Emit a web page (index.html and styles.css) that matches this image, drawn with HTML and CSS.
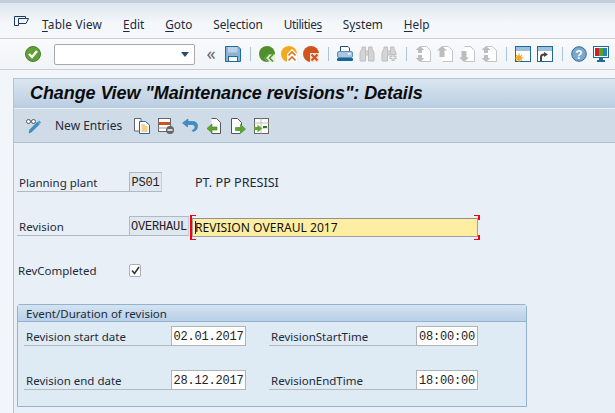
FILE: index.html
```html
<!DOCTYPE html>
<html lang="en">
<head>
<meta charset="utf-8">
<title>Change View</title>
<link rel="stylesheet" href="styles.css">
</head>
<body>
<div class="window">
  <header class="menubar">
    <svg class="menu-icon" width="16" height="12" viewBox="0 0 16 12"><path d="M.5.5H11.500V2.500H4.500V7.500H12L14.500 2.500H11.500M4.500 7.500V9.500H.5V.5" fill="none" stroke="#1c3a66"/></svg>
    <nav class="menu">
      <span class="m-table"><u>T</u>able View</span>
      <span><u>E</u>dit</span>
      <span><u>G</u>oto</span>
      <span class="m-sel">Se<u>l</u>ection</span>
      <span class="m-util">Utilitie<u>s</u></span>
      <span>S<u>y</u>stem</span>
      <span><u>H</u>elp</span>
    </nav>
  </header>

  <div class="toolbar">
    <svg class="ico ok" viewBox="0 0 16 16"><circle cx="8" cy="8" r="7.500" fill="#5f9f33" stroke="#4a7f2e"/><path d="M4 8l3 3 5-6" fill="none" stroke="#fff" stroke-width="2.400"/></svg>
    <div class="cmd"><span class="cmd-arrow"></span></div>
    <span class="chev">«</span>
    <svg class="ico" viewBox="0 0 16 16"><path d="M.5.5H13L15.500 3V15.500H.5Z" fill="#8cb2d6" stroke="#1f6a9c"/><rect x="3" y="1" width="9.500" height="5.500" fill="#b9d2e8"/><rect x="3.500" y="10.500" width="9" height="5" fill="#fff" stroke="#1f6a9c"/></svg>
    <i class="sep"></i>
    <svg class="ico" viewBox="0 0 16 16"><circle cx="8" cy="8" r="8" fill="#4f8f2c"/><path d="M16 8.500H9L5 12 8.500 16H16Z" fill="#e4f0d6"/><path d="M9.500 8.500L6 12l3.500 3.500M14 8.500L10.500 12l3.500 3.500" fill="none" stroke="#4f8f2c" stroke-width="1.500"/></svg>
    <svg class="ico" viewBox="0 0 16 16"><circle cx="8" cy="8" r="8" fill="#f3a81e"/><path d="M6 8l5-5 5 5V16H6Z" fill="#fff"/><path d="M7.500 9.500L11 6l3.500 3.500M7.500 14.500L11 11l3.500 3.500" fill="none" stroke="#e2701c" stroke-width="1.600"/></svg>
    <svg class="ico" viewBox="0 0 16 16"><circle cx="8" cy="8" r="8" fill="#d0541c"/><rect x="7" y="7" width="9" height="9" fill="#f7e2d6"/><path d="M8.500 8.500l6 6M14.500 8.500l-6 6" stroke="#d0541c" stroke-width="2.200"/></svg>
    <i class="sep"></i>
    <svg class="ico" viewBox="0 0 16 16"><path d="M3.500 5V.5H11L12.500 2V5" fill="#fff" stroke="#1f4f78"/><rect x=".5" y="5.500" width="15" height="6" rx="1.500" fill="#a8c6df" stroke="#5d8db4"/><rect x="11" y="7" width="2.500" height="1.500" fill="#fff"/><rect y="12" width="16" height="3" rx="1" fill="#0f6a98"/></svg>
    <svg class="ico dim" viewBox="0 0 16 16"><path d="M1 15V7L3 2.500V1H6.500V15ZM9.500 15V1H13V2.500L15 7V15ZM6.500 5H9.500V9H6.500Z" fill="#d4d4d4" stroke="#bfbfbf"/></svg>
    <svg class="ico dim" viewBox="0 0 16 16"><path d="M1 15V7L3 2.500V1H6.500V15ZM9.500 9V1H13V2.500L15 7V9ZM6.500 5H9.500V9H6.500Z" fill="#d4d4d4" stroke="#bfbfbf"/><path d="M12 8V15M8.500 11.500H15.500" stroke="#bfbfbf" stroke-width="3"/><path d="M12 9V14M9.500 11.500H14.500" stroke="#f0f0f0"/></svg>
    <i class="sep"></i>
    <svg class="ico dim" viewBox="0 0 16 16"><path d="M5.500.5H11.500L15.500 4.500V15.500H5.500" fill="#fff" stroke="#c4c4c4"/><path d="M5 0L9.500 4H7V7H3V4H.5ZM3 9H7V12H9.500L5 16 .5 12H3Z" fill="#bdbdbd"/></svg>
    <svg class="ico dim" viewBox="0 0 16 16"><path d="M5.500.5H11.500L15.500 4.500V15.500H5.500" fill="#fff" stroke="#c4c4c4"/><path d="M5 0L10 4.500H7.500V11H2.500V4.500H0Z" fill="#bdbdbd"/></svg>
    <svg class="ico dim" viewBox="0 0 16 16"><path d="M5.500.5H11.500L15.500 4.500V15.500H5.500" fill="#fff" stroke="#c4c4c4"/><path d="M5 16L10 11.500H7.500V5H2.500V11.500H0Z" fill="#bdbdbd"/></svg>
    <svg class="ico dim" viewBox="0 0 16 16"><path d="M5.500.5H11.500L15.500 4.500V15.500H5.500" fill="#fff" stroke="#c4c4c4"/><path d="M5 0L9.500 4H7V7H3V4H.5ZM3 9H7V12H9.500L5 16 .5 12H3Z" fill="#bdbdbd"/></svg>
    <i class="sep"></i>
    <svg class="ico" viewBox="0 0 16 16"><rect x=".5" y=".5" width="15" height="15" fill="#fff" stroke="#1f6a9c"/><rect x="1" y="1" width="14" height="4" fill="#9cc0dd"/><circle cx="4" cy="12" r="2.800" fill="#f5a81c"/><path d="M4 7.500V16.500M-.5 12H8.500M1 9l6 6M7 9l-6 6" stroke="#f5a81c"/></svg>
    <svg class="ico" viewBox="0 0 16 16"><rect x=".5" y=".5" width="15" height="15" fill="#fff" stroke="#1f6a9c"/><rect x="1" y="1" width="14" height="4" fill="#9cc0dd"/><path d="M4 15V11Q4 8.500 7 8.500H8" fill="none" stroke="#444" stroke-width="2"/><path d="M7 6l4 2.500-4 2.500Z" fill="#444"/></svg>
    <i class="sep"></i>
    <svg class="ico" viewBox="0 0 16 16"><circle cx="8" cy="8" r="7.300" fill="#7ba7cd" stroke="#2d6c9e"/><text x="8" y="12.500" class="help-q">?</text></svg>
    <svg class="ico" viewBox="0 0 16 16"><rect x=".5" y=".5" width="15" height="11" fill="#fff" stroke="#1f6a9c"/><rect x="2" y="2" width="4" height="8" fill="#c8202c"/><rect x="6" y="2" width="4" height="8" fill="#4ea72e"/><rect x="10" y="2" width="4" height="8" fill="#2d7fb8"/><path d="M6 12H10V14H12V16H4V14H6Z" fill="#1f6a9c"/></svg>
  </div>

  <div class="band"></div>

  <main class="panel">
    <h1 class="title">Change View "Maintenance revisions": Details</h1>

    <div class="apptools">
      <svg class="ico" viewBox="0 0 16 16"><circle cx="2.500" cy="3.500" r="2" fill="#fff" stroke="#555"/><circle cx="7.500" cy="3.500" r="2" fill="#fff" stroke="#555"/><path d="M4.500 3.500H5.500" stroke="#555"/><path d="M3 15l1-3.500L11.500 4l2 2L6 13.500Z" fill="#3f8fc4" stroke="#2878ad" stroke-width=".6"/><path d="M12 3.500l1-1 2 2-1 1Z" fill="#3f8fc4"/></svg>
      <span class="newent">New Entries</span>
      <div class="appicons">
        <svg class="ico" viewBox="0 0 16 16"><path d="M.5.500H7V13H.5Z" fill="#fff" stroke="#666"/><path d="M5.500 3.500H11.500L15.500 7V15.500H5.500Z" fill="#fff" stroke="#1f6a9c"/><path d="M7.500 7H11M7.500 9H13.500M7.500 11H13.500M7.500 13H13.500" stroke="#e9a21c"/></svg>
        <svg class="ico" viewBox="0 0 16 16"><rect x=".5" y=".5" width="12" height="13" fill="#fff" stroke="#666"/><rect x="1" y="4" width="11" height="3" fill="#d2501e"/><path d="M.5 10H8" stroke="#999"/><circle cx="12" cy="12" r="4" fill="#666"/><path d="M9.500 12H14.500" stroke="#fff" stroke-width="1.500"/></svg>
        <svg class="ico" viewBox="0 0 16 16"><path d="M6 1L.5 5 5.500 9V6.500H10Q13 6.500 13 9 13 11.500 10 12.500L11 13.500Q15.500 12.500 15.500 8 15.500 3.500 10.500 3.500H6Z" fill="#3f8fc4" stroke="#2a79ad" stroke-width=".6"/></svg>
        <svg class="ico" viewBox="0 0 16 16"><path d="M5.500.5H10.500L14.500 4.500V15.500H5.500" fill="#fff" stroke="#555"/><path d="M1 10.500L6 6V9H11V12H6V15Z" fill="#5ea52f" stroke="#3d7d1e" stroke-width=".6"/></svg>
        <svg class="ico" viewBox="0 0 16 16"><path d="M10 15.500H1.500V.5H7.500L11.500 4.500V7" fill="#fff" stroke="#555"/><path d="M15.500 11L10.500 6.500V9.500H5.500V12.500H10.500V15.500Z" fill="#5ea52f" stroke="#3d7d1e" stroke-width=".6"/></svg>
        <svg class="ico" viewBox="0 0 16 16"><rect x=".5" y=".5" width="14" height="15" fill="#fff" stroke="#666"/><path d="M7 .5V15.500M.5 5H14.500M.5 10H14.500" stroke="#bbb"/><path d="M9 9H13" stroke="#2f7f26" stroke-width="2"/><path d="M8 10.500L3.500 6.500V9H0V12H3.500V14.500Z" fill="#5ea52f"/></svg>
      </div>
    </div>

    <section class="form">
      <div class="row row-plant">
        <div class="lab lab-main">Planning plant</div>
        <div class="ro ro-plant">PS01</div>
        <div class="desc">PT. PP PRESISI</div>
      </div>
      <div class="row row-rev">
        <div class="lab lab-main">Revision</div>
        <div class="ro ro-rev">OVERHAUL</div>
        <div class="focus">
          <span class="br br-l"></span><span class="br br-tr"></span><span class="br br-br"></span>
          <div class="yellow"><span class="caret"></span>REVISION OVERAUL 2017</div>
        </div>
      </div>
      <div class="row row-check">
        <div class="lab-plain">RevCompleted</div>
        <div class="check"><svg width="9" height="9" viewBox="0 0 9 9"><path d="M1 4.500L3.500 7.500 8 1" fill="none" stroke="#333" stroke-width="1.600"/></svg></div>
      </div>

      <div class="group">
        <div class="group-head">Event/Duration of revision</div>
        <div class="group-body">
          <div class="grow">
            <div class="lab lab-date">Revision start date</div>
            <div class="inp inp-date">02.01.2017</div>
            <div class="lab lab-time">RevisionStartTime</div>
            <div class="inp inp-time">08:00:00</div>
          </div>
          <div class="grow grow-2">
            <div class="lab lab-date">Revision end date</div>
            <div class="inp inp-date">28.12.2017</div>
            <div class="lab lab-time">RevisionEndTime</div>
            <div class="inp inp-time">18:00:00</div>
          </div>
        </div>
      </div>
    </section>
  </main>
</div>
</body>
</html>
```
FILE: styles.css
```css
* { box-sizing: border-box; }
html, body { margin: 0; padding: 0; }
body {
  width: 615px;
  height: 413px;
  overflow: hidden;
  background: #f2f5fa;
  font-family: "Noto Sans", "Open Sans", sans-serif;
  font-size: 11.5px;
  color: #1c2a3a;
}
.window { display: flex; flex-direction: column; height: 413px; }

.menubar {
  height: 39px;
  flex: none;
  display: flex;
  align-items: center;
  padding: 6px 0 0 14px;
  border-top: 3px solid #c3cedd;
  border-bottom: 1px solid #c9ced6;
  background: linear-gradient(#dfe6f0, #f5f8fb 60%, #f6f8fb);
}
.menu-icon { flex: none; margin-top: -4px; }
.menu { display: flex; gap: 21px; margin-left: 12px; font-size: 11.8px; }
.menu span { white-space: nowrap; }
.menu u { text-underline-offset: 2px; }
.menu .m-table { letter-spacing: .2px; }
.menu .m-sel { letter-spacing: -.1px; }
.menu .m-util { letter-spacing: -.4px; }

.toolbar {
  height: 31px;
  flex: none;
  display: flex;
  align-items: center;
  padding-left: 25px;
  gap: 6px;
  background: linear-gradient(#f8fafc, #f1f4f8);
  border-bottom: 1px solid #c9ced6;
}
.ico { width: 16px; height: 16px; flex: none; display: block; }
.ok { margin-right: 7px; }
.cmd {
  width: 141px;
  height: 21px;
  background: #fff;
  border: 1px solid #a9a9a9;
  border-radius: 2px;
  display: flex;
  align-items: center;
  justify-content: flex-end;
  padding-right: 5px;
}
.cmd-arrow {
  width: 0;
  height: 0;
  border-left: 4.500px solid transparent;
  border-right: 4.500px solid transparent;
  border-top: 5px solid #2c4a73;
}
.chev {
  width: 12px;
  margin: -3px 2px 0 4px;
  color: #666;
  font-size: 18px;
  line-height: 16px;
  text-align: center;
}
.sep { width: 1px; height: 14px; margin: 0 2px 0 3px; background: #a9c4dd; flex: none; }
.help-q { font: bold 12px "Liberation Sans", sans-serif; fill: #fff; text-anchor: middle; }

.band { height: 8px; flex: none; }

.panel {
  flex: 1;
  margin-left: 13px;
  border-left: 1px solid #b7c3d2;
  border-top: 1px solid #b7c3d2;
  background: #e8eff7;
  min-height: 0;
}
.title {
  margin: 0;
  height: 30px;
  padding-left: 16px;
  font: italic bold 18px/28px "Liberation Sans", sans-serif;
  letter-spacing: -.09px;
  color: #0c0c0c;
  background: linear-gradient(#dbe6f1, #b9cde1);
  border-bottom: 1px solid #e8eff7;
  white-space: nowrap;
}
.apptools {
  height: 34px;
  display: flex;
  align-items: center;
  padding-left: 12px;
  background: #cfdce8;
  border-bottom: 1px solid #b2c0ce;
}
.newent { margin-left: 13px; width: 66px; white-space: nowrap; font-size: 12px; }
.appicons { display: flex; gap: 8px; margin-left: 13px; }

.form { display: flex; flex-direction: column; padding: 0 0 0 3px; }
.row { display: flex; height: 19px; align-items: flex-end; }
.row-plant { margin-top: 30px; }
.row-rev { margin-top: 25px; }
.row-check { margin-top: 28px; height: 13px; align-items: center; }
.lab {
  height: 19px;
  line-height: 19px;
  border-bottom: 1px solid #b5b9be;
  padding-left: 2px;
  flex: none;
  white-space: nowrap;
}
.lab-main { width: 112px; }
.lab-plain { width: 112px; padding-left: 1px; flex: none; line-height: 15px; }
.ro {
  height: 20px;
  background: #dfe7f0;
  border: 1px solid #b0b8c2;
  border-right-color: #c8ced6;
  font: 12px/20px "Liberation Mono", monospace;
  letter-spacing: -.2px;
  text-align: center;
  color: #222;
  flex: none;
}
.ro-plant { width: 33px; }
.ro-rev { width: 60px; }
.desc { margin-left: 33px; line-height: 19px; white-space: nowrap; align-self: center; font-size: 12.6px; }
.focus { position: relative; margin-left: 3px; margin-bottom: -1px; }
.yellow {
  width: 286px;
  height: 19px;
  padding-left: 2px;
  line-height: 17px;
  background: #fdeea1;
  border: 1px solid #a0a0a0;
  border-top-color: #909090;
  color: #111;
  font-size: 12.1px;
  white-space: nowrap;
}
.caret { display: inline-block; width: 1px; height: 13px; margin-right: -1px; background: #222; vertical-align: -2px; }
.br { position: absolute; border: 0 solid #f00010; }
.br-l { left: -2px; top: -3px; bottom: -3px; width: 6px; border-width: 1px 0 1px 2px; }
.br-tr { right: -2px; top: -3px; width: 6px; height: 5px; border-width: 1px 2px 0 0; }
.br-br { right: -2px; bottom: -3px; width: 6px; height: 5px; border-width: 0 2px 1px 0; }
.check {
  width: 12px;
  height: 13px;
  background: #fff;
  border: 1px solid #a8aeb6;
  border-radius: 2px;
  display: flex;
  align-items: center;
  justify-content: center;
}

.group {
  width: 510px;
  margin-top: 27px;
  border: 1px solid #93b2d1;
  border-radius: 3px 3px 0 0;
  background: #deeaf4;
}
.group-head {
  height: 17px;
  padding-left: 8px;
  line-height: 17px;
  background: linear-gradient(#d4e3f1, #b9d0e7);
  border-bottom: 1px solid #93b2d1;
  white-space: nowrap;
}
.group-body { padding: 4px 0 16px 6px; }
.grow { display: flex; align-items: flex-end; height: 20px; }
.grow-2 { margin-top: 24px; }
.grow .lab { height: 20px; line-height: 22px; }
.lab-date { width: 147px; }
.lab-time { width: 147px; margin-left: 23px; }
.inp {
  height: 20px;
  background: #fff;
  border: 1px solid #b0b4b8;
  font: 12px/21px "Liberation Mono", monospace;
  letter-spacing: -.2px;
  text-align: center;
  color: #222;
  flex: none;
}
.inp-date { width: 75px; }
.inp-time { width: 62px; }
```
